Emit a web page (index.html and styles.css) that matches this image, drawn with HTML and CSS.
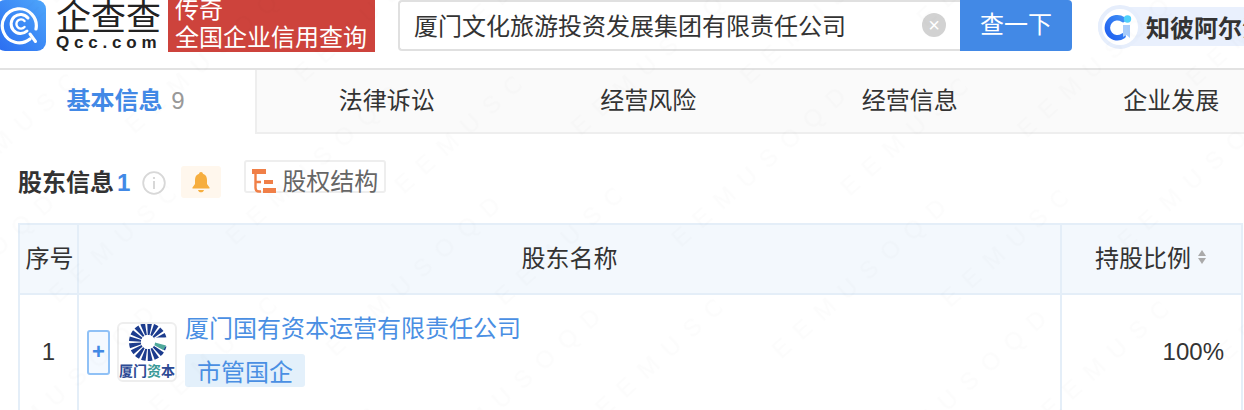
FILE: index.html
```html
<!DOCTYPE html>
<html lang="zh-CN">
<head>
<meta charset="utf-8">
<title>股东信息</title>
<link rel="stylesheet" href="styles.css">
</head>
<body>
<div class="page">
  <header class="header">
    <div class="logo-mark">
      <svg width="48" height="51" viewBox="0 0 48 51">
        <defs><linearGradient id="lg" x1="0" y1="1" x2="1" y2="0"><stop offset="0" stop-color="#2a6cf0"/><stop offset="1" stop-color="#4ea6fb"/></linearGradient></defs>
        <rect x="-4" y="0" width="50" height="51" rx="9" fill="url(#lg)"/>
        <g fill="none" stroke="#fff" stroke-linecap="round">
          <path d="M30 39 A17 17 0 1 1 36 29" stroke-width="3.200"/>
          <path d="M27 31 A9.500 9.500 0 1 1 28 18" stroke-width="3"/>
          <path d="M24.500 27 A4.600 4.600 0 1 1 24.500 21" stroke-width="2.400"/>
          <path d="M30 34 L35.500 41.500" stroke-width="3"/>
        </g>
      </svg>
    </div>
    <div class="brand">
      <div class="brand-cn">企查查</div>
      <div class="brand-en">Qcc.com</div>
    </div>
    <div class="banner"><div class="banner-text">传奇<br>全国企业信用查询</div></div>
    <div class="search">
      <div class="search-input">
        <span class="search-text">厦门文化旅游投资发展集团有限责任公司</span>
        <span class="clear">×</span>
      </div>
      <div class="search-btn">查一下</div>
    </div>
    <div class="alpha">
      <div class="alpha-icon">
        <svg width="32" height="32" viewBox="0 0 32 32">
          <defs><linearGradient id="ag" x1="0" y1="1" x2="1" y2="0"><stop offset="0" stop-color="#1f5ff0"/><stop offset="1" stop-color="#3f8df5"/></linearGradient></defs>
          <path d="M19 8.500 A10 10 0 1 0 19 25" fill="none" stroke="url(#ag)" stroke-width="5.500" stroke-linecap="round"/>
          <path d="M19 14 H26 V27 L22.500 24 L19 26 Z" fill="#a9cdfb"/>
          <circle cx="23.500" cy="8" r="3.700" fill="#4fd0fa"/>
        </svg>
      </div>
      <span class="alpha-text">知彼阿尔法</span>
    </div>
  </header>

  <nav class="tabs">
    <div class="tab tab-active">基本信息 <span class="tab-count">9</span></div>
    <div class="tab">法律诉讼</div>
    <div class="tab">经营风险</div>
    <div class="tab">经营信息</div>
    <div class="tab">企业发展</div>
  </nav>

  <section class="section-head">
    <h2 class="section-title">股东信息</h2>
    <span class="section-count">1</span>
    <svg class="info" width="24" height="24" viewBox="0 0 24 24">
      <circle cx="12" cy="12" r="10.800" fill="none" stroke="#d8d8d8" stroke-width="1.800"/>
      <rect x="11.200" y="10" width="1.600" height="8" fill="#cfcfcf"/>
      <circle cx="12" cy="7" r="1.100" fill="#cfcfcf"/>
    </svg>
    <div class="bell">
      <svg width="20" height="22" viewBox="0 0 20 22">
        <path d="M10 1 C11.200 1 11.800 1.800 11.900 2.700 C14.800 3.500 16 6 16 9 V13 L18.500 16.500 C18.800 17.200 18.500 17.500 18 17.500 H2 C1.500 17.500 1.200 17.200 1.500 16.500 L4 13 V9 C4 6 5.200 3.500 8.100 2.700 C8.200 1.800 8.800 1 10 1 Z" fill="#f6ae3f"/>
        <path d="M7 19 H13 C12.600 20.600 11.500 21.300 10 21.300 C8.500 21.300 7.400 20.600 7 19 Z" fill="#f6ae3f"/>
      </svg>
    </div>
    <div class="struct">
      <svg class="struct-icon" width="26" height="24" viewBox="0 0 26 24">
        <rect x="0" y="0" width="14" height="5" fill="#f07f47"/>
        <path d="M3.500 5 V19 Q3.500 22.500 7 22.500 H9 M3.500 13 H9" fill="none" stroke="#f07f47" stroke-width="2.400"/>
        <rect x="12" y="11" width="9" height="4" fill="#f07f47"/>
        <rect x="11" y="19" width="13" height="5" fill="#f07f47"/>
      </svg>
      <span>股权结构</span>
    </div>
  </section>

  <section class="table">
    <div class="cell head head-index">序号</div>
    <div class="cell head">股东名称</div>
    <div class="cell head head-ratio">持股比例
      <span class="sort"><i class="up"></i><i class="down"></i></span>
    </div>
    <div class="cell body-index">1</div>
    <div class="cell body-name">
      <div class="plus">+</div>
      <div class="co-logo">
        <svg class="burst" width="44" height="40" viewBox="0 0 44 40">
          <circle cx="23" cy="18" r="13" fill="none" stroke="#1c3c8e" stroke-width="12" stroke-dasharray="3.300 1.500" transform="rotate(12 23 18)"/>
          <path d="M30 13.500 H44 V22.500 H30 L27 18 Z" fill="#fff"/>
          <path d="M30 18.500 L41 21.500 L38.500 26 L29 21 Z" fill="#4fa99b"/>
          <circle cx="23" cy="18" r="7" fill="#fff"/>
        </svg>
        <span class="co-logo-text">厦门<b class="teal">资</b>本</span>
      </div>
      <div class="co-info">
        <a class="co-name">厦门国有资本运营有限责任公司</a>
        <span class="co-tag">市管国企</span>
      </div>
    </div>
    <div class="cell body-ratio">100%</div>
  </section>

  <svg class="watermark" width="1244" height="410" aria-hidden="true">
    <defs>
      <pattern id="wm" width="330" height="150" patternUnits="userSpaceOnUse" patternTransform="rotate(-42)">
        <text x="10" y="40" class="wm-text">EEMUSOQD</text>
        <text x="170" y="115" class="wm-text">EEMUSOQD</text>
      </pattern>
    </defs>
    <rect width="1244" height="410" fill="url(#wm)"/>
  </svg>
</div>
</body>
</html>
```

FILE: styles.css
```css
* { box-sizing: border-box; }
html, body { margin: 0; padding: 0; background: #fff; }
body {
  font-family: "Liberation Sans", "Noto Sans CJK SC", sans-serif;
  color: #333;
  font-size: 24px;
}
.page { position: relative; width: 1244px; height: 410px; overflow: hidden; }

.header {
  display: flex;
  height: 70px;
  border-bottom: 2px solid #e2e2e2;
  align-items: flex-start;
}
.header > * { flex: none; }
.logo-mark { width: 48px; height: 51px; line-height: 0; }
.brand { margin-left: 8px; width: 112px; color: #222; }
.brand-cn { font-size: 35px; line-height: 34px; margin-top: 1px; white-space: nowrap; }
.brand-en { font-size: 17px; line-height: 15px; letter-spacing: 4.800px; font-weight: 700; white-space: nowrap; }
.banner { width: 207px; height: 52px; background: #cd433c; overflow: hidden; color: #fff; padding-left: 7px; }
.banner-text { margin-top: -4px; line-height: 28px; white-space: nowrap; }
.search { display: flex; margin-left: 23px; height: 51px; }
.search-input {
  width: 562px;
  height: 51px;
  border: 2px solid #e0e0e0;
  border-right: 0;
  border-top-left-radius: 4px;
  border-bottom-left-radius: 4px;
  padding-left: 14px;
  padding-right: 14px;
  padding-bottom: 2px;
  display: flex;
  align-items: center;
  justify-content: space-between;
}
.search-text { white-space: nowrap; }
.clear {
  width: 24px; height: 24px; border-radius: 50%;
  background: #d2d2d2; color: #fff;
  font-size: 20px; line-height: 24px; text-align: center;
}
.search-btn {
  width: 112px; height: 51px;
  background: #4289e6; color: #fff;
  text-align: center; line-height: 50px;
  border-top-right-radius: 4px; border-bottom-right-radius: 4px;
}
.alpha {
  display: flex; align-items: center;
  margin-left: 26px; margin-top: 7px;
  height: 39px; width: 200px;
  background: #e9f0fd;
  border-radius: 20px;
  white-space: nowrap;
}
.alpha-icon {
  width: 44px; height: 44px; flex: none;
  background: #fff; border: 4px solid #e6eefc; border-radius: 50%;
  display: flex; align-items: center; justify-content: center;
}
.alpha-text { margin-left: 4px; font-weight: 700; color: #333; }

.tabs { display: flex; height: 64px; background: #fafafa; border-bottom: 2px solid #eee; }
.tab {
  flex: none;
  width: 261.500px; text-align: center; line-height: 62px;
  white-space: nowrap;
}
.tab-active {
  width: 257px; margin-right: -1px; background: #fff; color: #4289e6; font-weight: 700;
  border-right: 2px solid #eee; height: 64px; padding-right: 4px;
}
.tab-count { color: #999; font-weight: 400; margin-left: 2px; }

.section-head {
  display: flex; align-items: flex-start;
  padding-left: 18px; padding-top: 26px; height: 89px;
}
.section-head > * { flex: none; }
.section-title { margin: 6px 0 0; font-size: 24px; font-weight: 700; line-height: 34px; color: #333; }
.section-count { margin: 6px 0 0 3px; font-weight: 700; color: #4289e6; line-height: 34px; }
.info { margin: 11px 0 0 12px; }
.bell {
  width: 40px; height: 32px; margin: 6px 0 0 15px;
  background: #fff7ed; border-radius: 3px;
  display: flex; align-items: center; justify-content: center;
}
.struct {
  position: relative;
  width: 142px; height: 33px; margin-left: 23px;
  border: 2px solid #eee; border-radius: 3px;
  color: #666; line-height: 39px; padding-left: 36px; white-space: nowrap;
}
.struct-icon { position: absolute; left: 6px; top: 7px; }

.table {
  display: grid;
  grid-template-columns: 59px 983px 181px;
  grid-template-rows: 70px 130px;
  margin-left: 18px;
  width: 1225px;
  border-top: 2px solid #e4eef8;
  border-left: 2px solid #e4eef8;
}
.cell { border-right: 2px solid #e4eef8; border-bottom: 2px solid #e4eef8; }
.head {
  background: #f3f8fd; display: flex; align-items: center; justify-content: center;
  padding-bottom: 6px;
}
.head-index { padding-left: 2px; }
.head-ratio { justify-content: flex-end; padding-right: 35px; gap: 7px; }
.sort { display: flex; flex-direction: column; gap: 2px; margin-top: 1px; }
.sort i { display: block; width: 0; height: 0; border-left: 4.500px solid transparent; border-right: 4.500px solid transparent; }
.sort .up { border-bottom: 6px solid #aaa; }
.sort .down { border-top: 6px solid #aaa; }
.body-index { text-align: center; padding-top: 43px; line-height: 28px; }
.body-name { display: flex; align-items: flex-start; padding-left: 8px; }
.plus {
  flex: none;
  width: 23px; height: 45px; margin-top: 35px;
  border: 2px solid #90c1f6; border-radius: 3px;
  background: #f4f9ff; color: #4289e6; font-weight: 700;
  text-align: center; line-height: 40px; font-size: 22px;
}
.co-logo {
  flex: none;
  width: 60px; height: 60px; margin: 27px 0 0 7px;
  border: 2px solid #eee; border-radius: 6px;
  display: flex; flex-direction: column; align-items: center;
  overflow: hidden;
}
.burst { flex: none; }
.co-logo-text { font-size: 14px; line-height: 14px; color: #2c4a94; font-weight: 700; white-space: nowrap; }
.teal { color: #3c9a98; font-weight: 700; }
.co-info { margin-left: 8px; display: flex; flex-direction: column; align-items: flex-start; padding-top: 18px; }
.co-name { color: #4a8fe3; line-height: 32px; white-space: nowrap; }
.co-tag {
  margin-top: 9px; background: #e3f0fb; color: #4a8fe3;
  height: 33px; line-height: 38px; padding: 0 12px; border-radius: 3px;
}
.body-ratio { text-align: right; padding: 43px 17px 0 0; line-height: 28px; }

.watermark { position: absolute; left: 0; top: 0; pointer-events: none; }
.wm-text { font-family: "Liberation Sans", sans-serif; font-size: 24px; fill: #000; fill-opacity: 0.011; letter-spacing: 12px; }
```
